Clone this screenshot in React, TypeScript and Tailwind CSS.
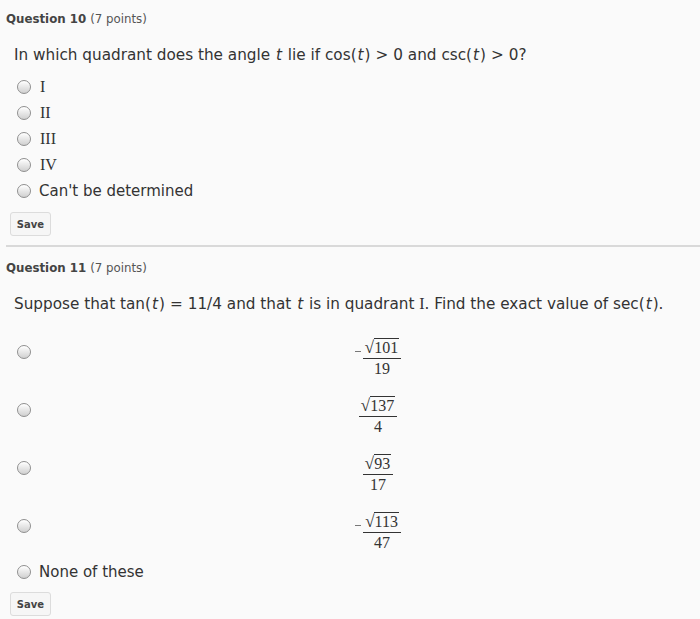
import React from "react";

const sans = { fontFamily: '"DejaVu Sans", Verdana, sans-serif' };
const serif = { fontFamily: '"Liberation Serif", "Times New Roman", serif' };

function Radio() {
  return (
    <span className="inline-block w-[14px] h-[14px] shrink-0 rounded-full border border-[#8f8f8f] bg-gradient-to-b from-[#ffffff] to-[#d0d0d0] shadow-[inset_0_1px_1px_rgba(255,255,255,0.8)]" />
  );
}

function SaveButton() {
  return (
    <div className="ml-[4px] w-[41px] h-[24px] flex items-center justify-center rounded-[3px] border border-[#dcdcdc] bg-[#f6f6f6] text-[10px] font-bold text-[#444]" style={sans}>
      Save
    </div>
  );
}

function Heading({ n }: { n: number }) {
  return (
    <div className="h-[16px] flex items-center text-[11.8px] text-[#444]" style={sans}>
      <span className="font-bold">Question {n}</span>
      <span className="ml-[4px] text-[#555]">(7 points)</span>
    </div>
  );
}

function Option({ children, isSerif }: { children: React.ReactNode; isSerif?: boolean }) {
  return (
    <div className="h-[26px] flex items-center ml-[11px]">
      <Radio />
      <span
        className={isSerif ? "ml-[9px] text-[16px] text-[#333]" : "ml-[8px] text-[15px] text-[#333]"}
        style={isSerif ? serif : sans}
      >
        {children}
      </span>
    </div>
  );
}

function T() {
  return <i className="mx-[1px]">t</i>;
}

function Op({ c }: { c: string }) {
  return <span className="mx-[5px]">{c}</span>;
}

function Frac({ neg, num, den }: { neg?: boolean; num: string; den: string }) {
  return (
    <span className="inline-flex items-center text-[#333]" style={serif}>
      {neg && <span className="mr-[2px] mb-[9px] w-[6px] h-px bg-[#777]" />}
      <span className="inline-flex flex-col items-center">
        <span className="flex items-end px-[2px] h-[21px] leading-none">
          <span className="text-[17px] leading-none">√</span>
          <span className="text-[16px] leading-none border-t border-[#333] pt-[1px] pr-[1px]">{num}</span>
        </span>
        <span className="w-full h-px bg-[#333] mt-[2px]" />
        <span className="text-[16px] leading-none mt-[2px] h-[16px] px-[1px]">{den}</span>
      </span>
    </span>
  );
}

function FracOption({ neg, num, den }: { neg?: boolean; num: string; den: string }) {
  return (
    <div className="h-[58px] flex items-center ml-[11px]">
      <Radio />
      <div className="flex-1 flex justify-center pl-[25px] pt-[8px]">
        <Frac neg={neg} num={num} den={den} />
      </div>
    </div>
  );
}

export default function App() {
  return (
    <div className="w-[700px] h-[619px] bg-[#fafafa] overflow-hidden">
      <div className="pl-[6px] pt-[12px] flex flex-col">
        <Heading n={10} />
        <div className="mt-[17px] ml-[8px] h-[20px] flex items-center text-[15.25px] text-[#333] whitespace-nowrap" style={sans}>
          <span>
            In which quadrant does the angle <T /> lie if cos(<T />)<Op c="&gt;" />0 and csc(<T />)<Op c="&gt;" />0?
          </span>
        </div>
        <div className="mt-[9px] flex flex-col">
          <Option isSerif>I</Option>
          <Option isSerif>II</Option>
          <Option isSerif>III</Option>
          <Option isSerif>IV</Option>
          <Option>Can't be determined</Option>
        </div>
        <div className="mt-[8px]">
          <SaveButton />
        </div>
        <div className="mt-[9px] h-[2px] bg-[#d9d9d9]" />
        <div className="mt-[14px]">
          <Heading n={11} />
        </div>
        <div className="mt-[17px] ml-[8px] h-[20px] flex items-center text-[15.25px] text-[#333] whitespace-nowrap" style={sans}>
          <span>
            Suppose that tan(<T />)<Op c="=" />11/4 and that <T /> is in quadrant <span className="text-[16px]" style={serif}>I</span>. Find the exact value of sec(<T />).
          </span>
        </div>
        <div className="mt-[9px] flex flex-col">
          <FracOption neg num="101" den="19" />
          <FracOption num="137" den="4" />
          <FracOption num="93" den="17" />
          <FracOption neg num="113" den="47" />
        </div>
        <div className="mt-[4px]">
          <Option>None of these</Option>
        </div>
        <div className="mt-[7px]">
          <SaveButton />
        </div>
      </div>
    </div>
  );
}
